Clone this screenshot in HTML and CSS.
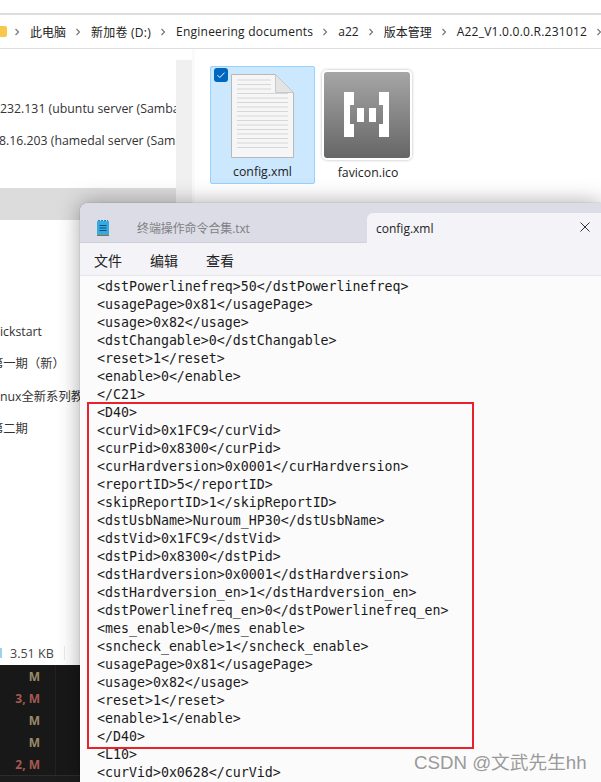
FILE: index.html
```html
<!DOCTYPE html>
<html lang="zh">
<head>
<meta charset="utf-8">
<title>config.xml</title>
<link rel="stylesheet" href="styles.css">
</head>
<body>
<div class="desktop">
  <section class="explorer">
    <div class="topstrip"></div>
    <nav class="crumbs">
      <span class="folder"></span>
      <svg class="chev first" viewBox="0 0 6 8"><path d="M1.5 1l3 3-3 3"/></svg>
      <span>此电脑</span>
      <svg class="chev" viewBox="0 0 6 8"><path d="M1.5 1l3 3-3 3"/></svg>
      <span class="wide">新加卷 (D:)</span>
      <svg class="chev" viewBox="0 0 6 8"><path d="M1.5 1l3 3-3 3"/></svg>
      <span class="wide">Engineering documents</span>
      <svg class="chev" viewBox="0 0 6 8"><path d="M1.5 1l3 3-3 3"/></svg>
      <span>a22</span>
      <svg class="chev" viewBox="0 0 6 8"><path d="M1.5 1l3 3-3 3"/></svg>
      <span>版本管理</span>
      <svg class="chev" viewBox="0 0 6 8"><path d="M1.5 1l3 3-3 3"/></svg>
      <span class="wide">A22_V1.0.0.0.R.231012</span>
      <svg class="chev" viewBox="0 0 6 8"><path d="M1.5 1l3 3-3 3"/></svg>
    </nav>
    <div class="main">
      <aside class="side">
        <div class="net n1">232.131 (ubuntu server (Samba</div>
        <div class="net n2">8.16.203 (hamedal server (Samba</div>
        <div class="selrow"></div>
        <div class="links">
          <div class="lnk">ickstart</div>
          <div class="lnk cut">第一期（新）</div>
          <div class="lnk">nux全新系列教程</div>
          <div class="lnk cut">第二期</div>
        </div>
        <div class="status"><i class="tick"></i><span>3.51 KB</span><i class="div"></i></div>
        <div class="term">
          <div class="m">M</div>
          <div class="m r">3, M</div>
          <div class="m">M</div>
          <div class="m">M</div>
          <div class="m r">2, M</div>
        </div>
      </aside>
      <div class="scroll"></div>
      <div class="files">
        <div class="tile sel">
          <span class="check"><svg viewBox="0 0 14 14"><path d="M3.5 7.2l2.3 2.3 4.7-4.800"/></svg></span>
          <svg class="doc" viewBox="0 0 63 84">
            <path class="paper" d="M.5.5h44l18 18v65h-62z"/>
            <path class="fold" d="M44.500.5v18h18z"/>
            <path class="rules" d="M6 6h34M6 10.500h34M6 15h34M6 19.500h51M6 24h51M6 28.500h51M6 33h51M6 37.500h51M6 42h51M6 46.500h51M6 51h51M6 55.500h51M6 60h51M6 64.500h51M6 69h51M6 73.500h51"/>
          </svg>
          <span class="name">config.xml</span>
        </div>
        <div class="tile">
          <span class="ico">
            <svg viewBox="0 0 86 86"><path d="M20 20h10v13h-4v19h4v13H20zM33 36h7v14h-7zM45 36h7v14h-7zM55 20h10v45H55V52h4V33h-4z"/></svg>
          </span>
          <span class="name">favicon.ico</span>
        </div>
      </div>
    </div>
  </section>

  <section class="notepad">
    <header class="tabs">
      <div class="tab">
        <svg class="nicon" viewBox="0 0 12 16"><rect x="0" y="1" width="12" height="14.500" rx="1" fill="#35aade"/><rect y="15" width="12" height="1" fill="#a5672e"/><path d="M2.500 5.500h7M2.500 8h7M2.500 10.500h7" stroke="#0b4f7c" stroke-width="1"/><path d="M1 .5h10" stroke="#1a7fb5" stroke-dasharray="2 1"/></svg>
        <span class="tname">终端操作命令合集.txt</span>
      </div>
      <div class="tab on">
        <span>config.xml</span>
        <svg class="x" viewBox="0 0 10 10"><path d="M.5.5l9 9M9.500.5l-9 9"/></svg>
      </div>
    </header>
    <div class="menu"><span>文件</span><span>编辑</span><span>查看</span></div>
    <pre class="code">&lt;dstPowerlinefreq&gt;50&lt;/dstPowerlinefreq&gt;
&lt;usagePage&gt;0x81&lt;/usagePage&gt;
&lt;usage&gt;0x82&lt;/usage&gt;
&lt;dstChangable&gt;0&lt;/dstChangable&gt;
&lt;reset&gt;1&lt;/reset&gt;
&lt;enable&gt;0&lt;/enable&gt;
&lt;/C21&gt;
&lt;D40&gt;
&lt;curVid&gt;0x1FC9&lt;/curVid&gt;
&lt;curPid&gt;0x8300&lt;/curPid&gt;
&lt;curHardversion&gt;0x0001&lt;/curHardversion&gt;
&lt;reportID&gt;5&lt;/reportID&gt;
&lt;skipReportID&gt;1&lt;/skipReportID&gt;
&lt;dstUsbName&gt;Nuroum_HP30&lt;/dstUsbName&gt;
&lt;dstVid&gt;0x1FC9&lt;/dstVid&gt;
&lt;dstPid&gt;0x8300&lt;/dstPid&gt;
&lt;dstHardversion&gt;0x0001&lt;/dstHardversion&gt;
&lt;dstHardversion_en&gt;1&lt;/dstHardversion_en&gt;
&lt;dstPowerlinefreq_en&gt;0&lt;/dstPowerlinefreq_en&gt;
&lt;mes_enable&gt;0&lt;/mes_enable&gt;
&lt;sncheck_enable&gt;1&lt;/sncheck_enable&gt;
&lt;usagePage&gt;0x81&lt;/usagePage&gt;
&lt;usage&gt;0x82&lt;/usage&gt;
&lt;reset&gt;1&lt;/reset&gt;
&lt;enable&gt;1&lt;/enable&gt;
&lt;/D40&gt;
&lt;L10&gt;
&lt;curVid&gt;0x0628&lt;/curVid&gt;</pre>
  </section>
  <div class="redbox"></div>
  <div class="mark">CSDN @文武先生hh</div>
</div>
</body>
</html>
```
FILE: styles.css
```css
html, body { margin: 0; padding: 0; overflow: hidden; background: #fff; }
.desktop {
  position: relative; width: 601px; height: 782px; overflow: hidden;
  font-family: "Open Sans", "Noto Sans CJK SC", sans-serif; color: #1c1c1c;
}
.explorer { display: flex; flex-direction: column; height: 782px; }
.topstrip { height: 3px; border-bottom: 1px solid #dcdcdc; padding-bottom: 10px; box-sizing: content-box; flex: none; }
.crumbs {
  flex: none; height: 33px; box-sizing: content-box;
  border-top: 1px solid #dedede; border-bottom: 1px solid #dedede;
  display: flex; align-items: center; white-space: nowrap; font-size: 12px; color: #222;
}
.wide { letter-spacing: .24px; }
.folder { width: 7px; height: 11px; background: #f9c84a; border-radius: 0 2px 2px 0; flex: none; }
.chev { width: 6px; height: 8px; margin: 0 10px 0 9px; flex: none; }
.chev path { fill: none; stroke: #777; stroke-width: 1.2; }
.chev.first { margin-left: 7px; }
.main { flex: 1; display: flex; min-height: 0; }
.side { width: 176px; flex: none; display: flex; flex-direction: column; overflow: hidden; font-size: 12.3px; }
.net { white-space: nowrap; height: 32px; line-height: 32px; color: #333; flex: none; }
.n1 { margin-top: 44px; }
.n2 { margin-left: -1px; }
.selrow { height: 32px; margin-top: 31px; background: #dcdcdc; flex: none; }
.links { margin-top: 96px; flex: none; }
.lnk { height: 32.300px; line-height: 32px; white-space: nowrap; color: #333; }
.cut { margin-left: -9px; }
.status { margin-top: 196px; height: 24px; display: flex; align-items: center; color: #444; flex: none; font-size: 12.500px; }
.tick { width: 2px; height: 10px; background: #9ed0f0; margin-right: 8px; }
.div { width: 1px; height: 14px; background: #eaeaea; margin-left: 10px; }
.term {
  flex: 1; width: 80px; padding-top: 1px; box-sizing: border-box; position: relative;
  background: linear-gradient(#181818 0 110px, #2c2c2c 110px 111px, #1c1c1c 111px);
}
.term::after { content: ""; position: absolute; left: 55px; top: 0; width: 1px; height: 110px; background: #222; }
.m { width: 40px; height: 22px; line-height: 22px; text-align: right; font-family: "Noto Sans", sans-serif; font-weight: 700; font-size: 12px; color: #9a8a68; }
.m.r { color: #a35a50; }
.scroll { width: 16px; flex: none; margin-top: 11px; background: #f0f0f0; }
.files { flex: 1; display: flex; align-items: flex-start; gap: 7px; padding: 17px 0 0 15px; background: #fff; border-left: 3px solid #fafafa; }
.tile { position: relative; width: 105px; height: 118px; box-sizing: border-box; display: flex; flex-direction: column; align-items: center; }
.tile.sel { background: #cce8ff; border: 1px solid #99d1ff; border-radius: 2px; }
.tile + .tile { width: 90px; }
.check { position: absolute; left: 3px; top: 1px; width: 14px; height: 14px; background: #0067c0; border-radius: 3px; }
.check svg { display: block; }
.check path { fill: none; stroke: #fff; stroke-width: 1; }
.doc { width: 63px; height: 84px; margin-top: 7px; flex: none; }
.paper { fill: #f6f6f6; stroke: #b8b8b8; }
.fold { fill: #e4e4e4; stroke: #c8c8c8; }
.rules { stroke: #d6d6d6; stroke-width: 1; }
.name { font-size: 12.300px; line-height: 16px; margin-top: 6px; color: #222; }
.ico { display: block; width: 86px; height: 86px; margin-top: 4px; border: 2px solid #fff; border-radius: 5px; background: linear-gradient(#a6a6a6, #666); box-shadow: 0 0 3px rgba(0,0,0,.3); flex: none; }
.ico svg { display: block; width: 86px; height: 86px; fill: #fff; }
.ico + .name { margin: 5px 0 0 2px; }

.notepad {
  position: absolute; left: 80px; top: 203px; width: 521px; height: 579px;
  display: flex; flex-direction: column; background: #fbfbfb;
  border-radius: 8px 0 0 0; box-shadow: 0 0 22px rgba(0,0,0,.35), 0 0 1px rgba(0,0,0,.5);
}
.tabs { height: 40px; flex: none; display: flex; align-items: flex-end; background: #dcdce6; border-radius: 8px 0 0 0; }
.tab { height: 30px; display: flex; align-items: center; font-size: 12px; box-sizing: border-box; }
.tab:first-child { width: 287px; background: #dcdce6; padding-left: 17px; border-bottom: 1px solid #d0d0da; border-radius: 0 0 3px 0; }
.nicon { width: 12px; height: 16px; flex: none; }
.tname { margin-left: 28px; color: #808084; letter-spacing: -.1px; }
.tab.on { flex: 1; background: #f3f3f8; border-radius: 6px 0 0 0; padding: 0 11px 0 9px; justify-content: space-between; color: #222; }
.x { width: 10px; height: 10px; margin-top: -2px; }
.x path { stroke: #333; stroke-width: 1; fill: none; }
.menu { height: 33px; flex: none; box-sizing: border-box; background: #f3f3f8; border-bottom: 1px solid #e6e6e8; display: flex; align-items: center; padding: 1px 0 0 14px; gap: 28px; font-size: 14px; color: #222; }
.code {
  margin: 0; padding: 2px 0 0 17px; flex: 1; overflow: hidden;
  font-family: "DejaVu Sans Mono", monospace; font-size: 13.280px; line-height: 18px; color: #1a1a1a;
}
.redbox { position: absolute; left: 87px; top: 402px; width: 383px; height: 343px; border: 2px solid #e8212b; }
.mark { position: absolute; left: 414px; top: 752px; font-family: "Liberation Sans", "Noto Sans CJK SC", sans-serif; font-size: 18.700px; line-height: 22px; color: #9a9a9a; white-space: nowrap; }
```
